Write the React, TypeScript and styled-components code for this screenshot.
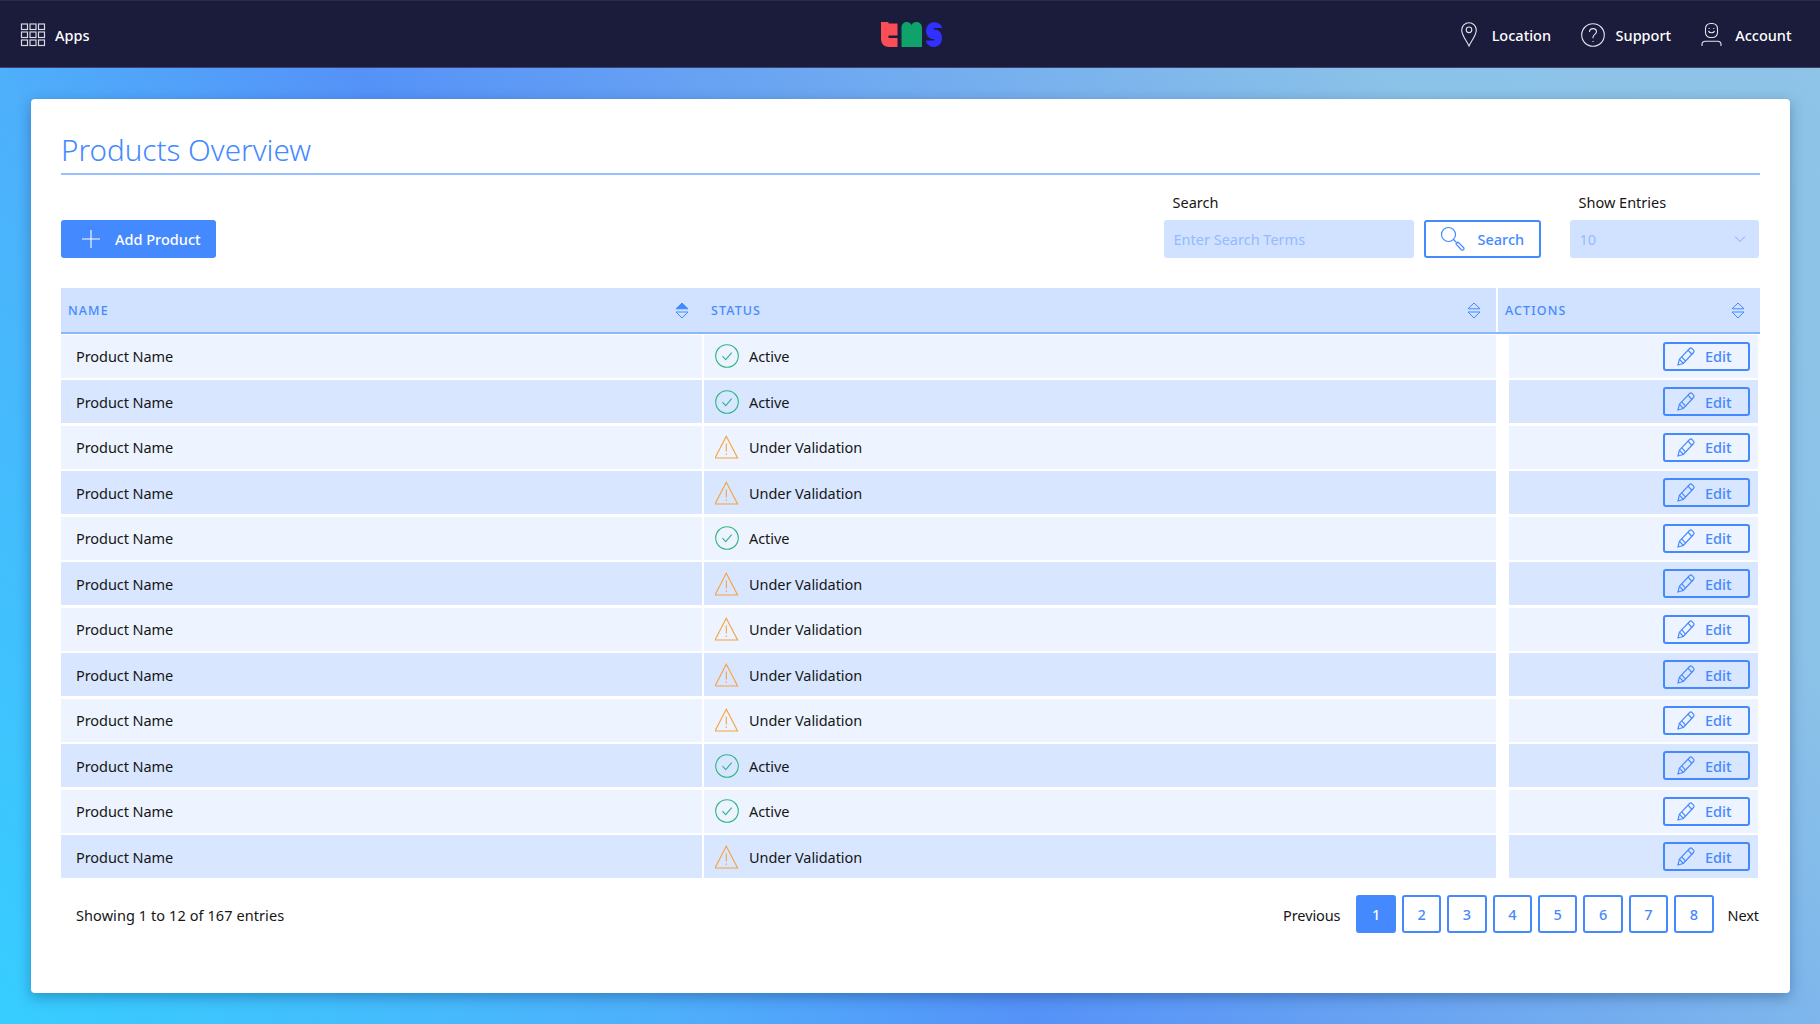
import React from 'react';
import styled, { createGlobalStyle } from 'styled-components';

const GlobalStyle = createGlobalStyle`
  html, body {
    margin: 0;
    padding: 0;
  }
  body {
    font-family: 'Noto Sans', Roboto, sans-serif;
    color: #161616;
  }
  * {
    box-sizing: border-box;
  }
`;

const Page = styled.div`
  width: 1820px;
  height: 1024px;
  display: flex;
  flex-direction: column;
  overflow: hidden;
  background: linear-gradient(54.6deg, #36ceff 0%, #4eaffb 26.5%, #5592f8 40.5%, #8bc2e8 81%, #8ec4e6 100%);
`;

const TopBar = styled.header`
  height: 68px;
  flex: none;
  display: flex;
  align-items: center;
  justify-content: space-between;
  padding: 1px 28.5px 0 20px;
  background: #1b1b3b;
  box-shadow: inset 0 -1px 0 #3d4270, inset 0 1px 0 #2a2a4c;
  position: relative;
`;

const NavGroup = styled.nav`
  display: flex;
  align-items: center;
  gap: 30px;
`;

const NavItem = styled.a<{ $gap: number }>`
  display: flex;
  align-items: center;
  gap: ${(p) => p.$gap}px;
  color: #fff;
  font-size: 14.5px;
  font-weight: 500;
`;

const Logo = styled.svg`
  position: absolute;
  left: 880px;
  top: 21px;
`;

const Card = styled.main`
  margin: 30.5px 30.5px 0 30.5px;
  height: 894.5px;
  padding: 30.5px 29.5px 0 30.5px;
  background: #fff;
  border-radius: 4px;
  box-shadow: 0 4px 14px rgba(10, 40, 90, 0.35);
`;

const Title = styled.h1`
  margin: 0;
  height: 46px;
  font-size: 29.6px;
  line-height: 42px;
  font-weight: 300;
  color: #4589ff;
  border-bottom: 2px solid #97bfff;
`;

const Toolbar = styled.div`
  display: flex;
  align-items: flex-end;
  justify-content: space-between;
  height: 83px;
`;

const Filters = styled.div`
  display: flex;
  align-items: flex-end;
  margin-right: 1.5px;
`;

const Field = styled.label<{ $indent: number }>`
  display: flex;
  flex-direction: column;
  font-size: 14.5px;
  color: #161616;
  & > span {
    height: 28px;
    padding-left: ${(p) => p.$indent}px;
  }
`;

const Control = styled.div<{ $width: number }>`
  width: ${(p) => p.$width}px;
  height: 38px;
  display: flex;
  align-items: center;
  justify-content: space-between;
  padding: 0 13px 0 10px;
  border-radius: 3px;
  background: #d0e2ff;
  color: #94bbff;
  font-size: 14.5px;
`;

const SolidButton = styled.button`
  width: 155px;
  height: 38px;
  display: flex;
  align-items: center;
  gap: 14px;
  padding: 0 0 0 20px;
  border: 0;
  border-radius: 3px;
  background: #4589ff;
  color: #fff;
  font: 500 14.5px 'Noto Sans', sans-serif;
`;

const OutlineButton = styled.button<{ $width: number; $gap: number; $inset: number }>`
  width: ${(p) => p.$width}px;
  display: flex;
  align-items: center;
  gap: ${(p) => p.$gap}px;
  padding: 0 0 0 ${(p) => p.$inset}px;
  background: #fff;
  border: 2px solid #4589ff;
  border-radius: 3px;
  color: #4589ff;
  font: 500 14.5px 'Noto Sans', sans-serif;
`;

const SearchButton = styled(OutlineButton)`
  height: 38px;
  margin: 0 29px 0 10px;
`;

const EditButton = styled(OutlineButton)`
  height: 29px;
  background: transparent;
`;

const TableHead = styled.div`
  margin-top: 30px;
  height: 46px;
  display: grid;
  grid-template-columns: 1435px 1fr;
  gap: 2px;
  border-bottom: 2px solid #8db6ff;
`;

const HeadGroup = styled.div<{ $columns: string }>`
  display: grid;
  grid-template-columns: ${(p) => p.$columns};
  background: #d0e2ff;
`;

const HeadCell = styled.div`
  display: flex;
  align-items: center;
  justify-content: space-between;
  padding: 1px 15px 0 7px;
  color: #4589ff;
  font-size: 12.5px;
  font-weight: 500;
  letter-spacing: 1.1px;
`;

const Rows = styled.div`
  margin-top: 0.7px;
  display: flex;
  flex-direction: column;
  gap: 2.5px;
`;

const Row = styled.div`
  height: 43px;
  display: grid;
  grid-template-columns: 641px 792px 260px;
  column-gap: 2px;
  font-size: 14.5px;
  letter-spacing: -0.07px;
  & > div:last-child {
    margin-left: 11px;
  }
`;

const Cell = styled.div<{ $even: boolean }>`
  display: flex;
  align-items: center;
  background: ${(p) => (p.$even ? '#d8e7ff' : '#edf4ff')};
`;

const NameCell = styled(Cell)`
  padding-left: 15px;
`;

const StatusCell = styled(Cell)`
  padding-left: 11px;
  gap: 10px;
`;

const ActionCell = styled(Cell)`
  justify-content: flex-end;
  padding-right: 8.5px;
`;

const Footer = styled.div`
  margin-top: 17px;
  display: flex;
  align-items: center;
  justify-content: space-between;
  padding: 0 1px 0 15px;
  font-size: 14.5px;
  letter-spacing: -0.1px;
`;

const FooterText = styled.span`
  padding-top: 3px;
`;

const EntryCount = styled(FooterText)`
  letter-spacing: 0.08px;
`;

const Pager = styled.div`
  display: flex;
  align-items: center;
  gap: 6px;
`;

const PagerLabel = styled(FooterText)<{ $before: number; $after: number }>`
  margin: 0 ${(p) => p.$after}px 0 ${(p) => p.$before}px;
`;

const PageButton = styled.button<{ $active?: boolean }>`
  width: 39.4px;
  height: 37.5px;
  padding: 0;
  border: 2px solid #4589ff;
  border-radius: 3px;
  background: ${(p) => (p.$active ? '#4589ff' : '#fff')};
  color: ${(p) => (p.$active ? '#fff' : '#4589ff')};
  font: 500 14.5px 'Noto Sans', sans-serif;
`;

const AppsIcon = () => (
  <svg width="26" height="26" viewBox="0 0 26 26" fill="none" stroke="#d8d8e2" strokeWidth="1.2">
    {[0, 1, 2].map((r) =>
      [0, 1, 2].map((c) => <rect key={`${r}${c}`} x={1.5 + c * 8.5} y={2 + r * 8} width="6" height="5.5" />)
    )}
  </svg>
);

const LocationIcon = () => (
  <svg width="16" height="25" viewBox="0 0 16 25" fill="none" stroke="#e4e4ee" strokeWidth="1.1">
    <path d="M8 24C5.5 18.5.7 13.5.7 8a7.3 7.3 0 0 1 14.6 0c0 5.5-4.8 10.5-7.3 16z" />
    <circle cx="8" cy="7.8" r="2.8" />
  </svg>
);

const SupportIcon = () => (
  <svg width="24" height="24" viewBox="0 0 24 24" fill="none" stroke="#e4e4ee" strokeWidth="1.1">
    <circle cx="12" cy="12" r="11.3" />
    <path d="M8.5 9.1c0-2.2 1.7-3.5 3.6-3.5 2 0 3.400 1.300 3.400 3.100 0 2.600-3.500 2.800-3.500 5.600v1" />
    <path d="M12 17.900v1" />
  </svg>
);

const AccountIcon = () => (
  <svg width="21" height="26" viewBox="0 0 21 26" fill="none" stroke="#e4e4ee" strokeWidth="1.1">
    <rect x="4.5" y="1.5" width="12" height="14" rx="5" />
    <path d="M7.5 9c.8 2.4 5.2 2.4 6 0" />
    <path d="M8.2 6v1M12.8 6v1" />
    <path d="M1 24v-1.5c0-2 1.5-3.2 3.5-3.2h12c2 0 3.5 1.2 3.5 3.2V24" />
  </svg>
);

const PlusIcon = () => (
  <svg width="20" height="20" viewBox="0 0 20 20" stroke="#fff" strokeWidth="1.1">
    <path d="M10 1v18M1 10h18" />
  </svg>
);

const SearchIcon = () => (
  <svg width="26" height="26" viewBox="0 0 26 26" fill="none" stroke="#4589ff" strokeWidth="1.2">
    <circle cx="8.5" cy="8.5" r="7" />
    <path d="M13.5 13.5l3 3" />
    <path d="M16 18l2-2 5.5 5.5c.7.8.7 1.6 0 2.2-.6.6-1.5.6-2.2 0z" />
  </svg>
);

const ChevronIcon = () => (
  <svg width="12" height="12" viewBox="0 0 12 12" fill="none" stroke="#7fabff" strokeWidth="1">
    <path d="M1 3.5l5 5 5-5" />
  </svg>
);

const SortIcon = ({ active }: { active?: boolean }) => (
  <svg width="14" height="17" viewBox="0 0 14 17" fill="none" stroke="#4589ff" strokeWidth="1">
    <path d="M1 6.8L7 1l6 5.8z" fill={active ? '#4589ff' : 'none'} />
    <path d="M1 10h12l-6 6z" />
  </svg>
);

const CheckIcon = () => (
  <svg width="24" height="24" viewBox="0 0 24 24" fill="none" stroke="#2fb583" strokeWidth="1.1">
    <circle cx="12" cy="12" r="11.3" />
    <path d="M7.5 12.2l3.2 3.4 6-7" />
  </svg>
);

const WarningIcon = () => (
  <svg width="24" height="24" viewBox="0 0 24 24" fill="none" stroke="#f7a23b" strokeWidth="1.1">
    <path d="M11.3 1.2L22.6 23H0z" />
    <path d="M11.3 8.5v8M11.3 18.4v1.600" />
  </svg>
);

const PencilIcon = () => (
  <svg width="18" height="19" viewBox="0 0 18 19" fill="none" stroke="#4589ff" strokeWidth="1.2">
    <path d="M1 18l1.4-5.8L12.6 1.5c.8-.7 1.8-.6 2.5.1l1.4 1.5c.7.7.7 1.7 0 2.4L6.3 16.5z" />
    <path d="M2.4 12.2l3.9 4.300M11 3.2l4 4.300M4.700 9.800l3.900 4.300" />
  </svg>
);

const LogoMark = () => (
  <Logo width="64" height="27" viewBox="0 0 64 27">
    <path fill="#fa4d56" d="M1 1H8.5V2.5H17.5V14.5H8.5V17H17.5V26H9C4.5 26 1 23 1 18Z" />
    <path fill="#0fa36b" d="M21.5 26V7c0-3.5 2-6 5-6 2.5 0 4 1 5 3 1-2 2.5-3 5-3 3.2 0 5.5 2.5 5.5 6v19z" />
    <path
      fill="#3030ff"
      d="M54 1.200c4 0 8 2.300 8 5.800h-7.500c-1 0-1 1.500 0 1.500 4.200 0 7.500 3 7.500 8.500 0 5.500-3.500 9-8 9-4.500 0-8-3-8-6.500h7.500c1 0 1-1.500 0-1.500-4.500 0-7.500-3.500-7.500-8.300 0-4.500 3.500-8.500 8-8.500z"
    />
  </Logo>
);

const products = [
  true, true, false, false, true, false, false, false, false, true, true, false,
];

const App = () => {
  return (
    <Page>
      <GlobalStyle />
      <TopBar>
        <NavGroup>
          <NavItem $gap={9}>
            <AppsIcon />
            Apps
          </NavItem>
        </NavGroup>
        <LogoMark />
        <NavGroup>
          <NavItem $gap={14.5}>
            <LocationIcon />
            Location
          </NavItem>
          <NavItem $gap={10.5}>
            <SupportIcon />
            Support
          </NavItem>
          <NavItem $gap={13}>
            <AccountIcon />
            Account
          </NavItem>
        </NavGroup>
      </TopBar>
      <Card>
        <Title>Products Overview</Title>
        <Toolbar>
          <SolidButton>
            <PlusIcon />
            Add Product
          </SolidButton>
          <Filters>
            <Field $indent={9}>
              <span>Search</span>
              <Control $width={250}>Enter Search Terms</Control>
            </Field>
            <SearchButton $width={117} $gap={12} $inset={14}>
              <SearchIcon />
              Search
            </SearchButton>
            <Field $indent={9}>
              <span>Show Entries</span>
              <Control $width={189}>
                10
                <ChevronIcon />
              </Control>
            </Field>
          </Filters>
        </Toolbar>
        <TableHead>
          <HeadGroup $columns="643px 1fr">
            <HeadCell>
              NAME
              <SortIcon active />
            </HeadCell>
            <HeadCell>
              STATUS
              <SortIcon />
            </HeadCell>
          </HeadGroup>
          <HeadGroup $columns="1fr">
            <HeadCell>
              ACTIONS
              <SortIcon />
            </HeadCell>
          </HeadGroup>
        </TableHead>
        <Rows>
          {products.map((active, i) => (
            <Row key={i}>
              <NameCell $even={i % 2 === 1}>Product Name</NameCell>
              <StatusCell $even={i % 2 === 1}>
                {active ? <CheckIcon /> : <WarningIcon />}
                {active ? 'Active' : 'Under Validation'}
              </StatusCell>
              <ActionCell $even={i % 2 === 1}>
                <EditButton $width={87} $gap={10} $inset={12.5}>
                  <PencilIcon />
                  Edit
                </EditButton>
              </ActionCell>
            </Row>
          ))}
        </Rows>
        <Footer>
          <EntryCount>Showing 1 to 12 of 167 entries</EntryCount>
          <Pager>
            <PagerLabel $before={0} $after={10}>
              Previous
            </PagerLabel>
            {[1, 2, 3, 4, 5, 6, 7, 8].map((n) => (
              <PageButton key={n} $active={n === 1}>
                {n}
              </PageButton>
            ))}
            <PagerLabel $before={8} $after={0}>
              Next
            </PagerLabel>
          </Pager>
        </Footer>
      </Card>
    </Page>
  );
};

export default App;
